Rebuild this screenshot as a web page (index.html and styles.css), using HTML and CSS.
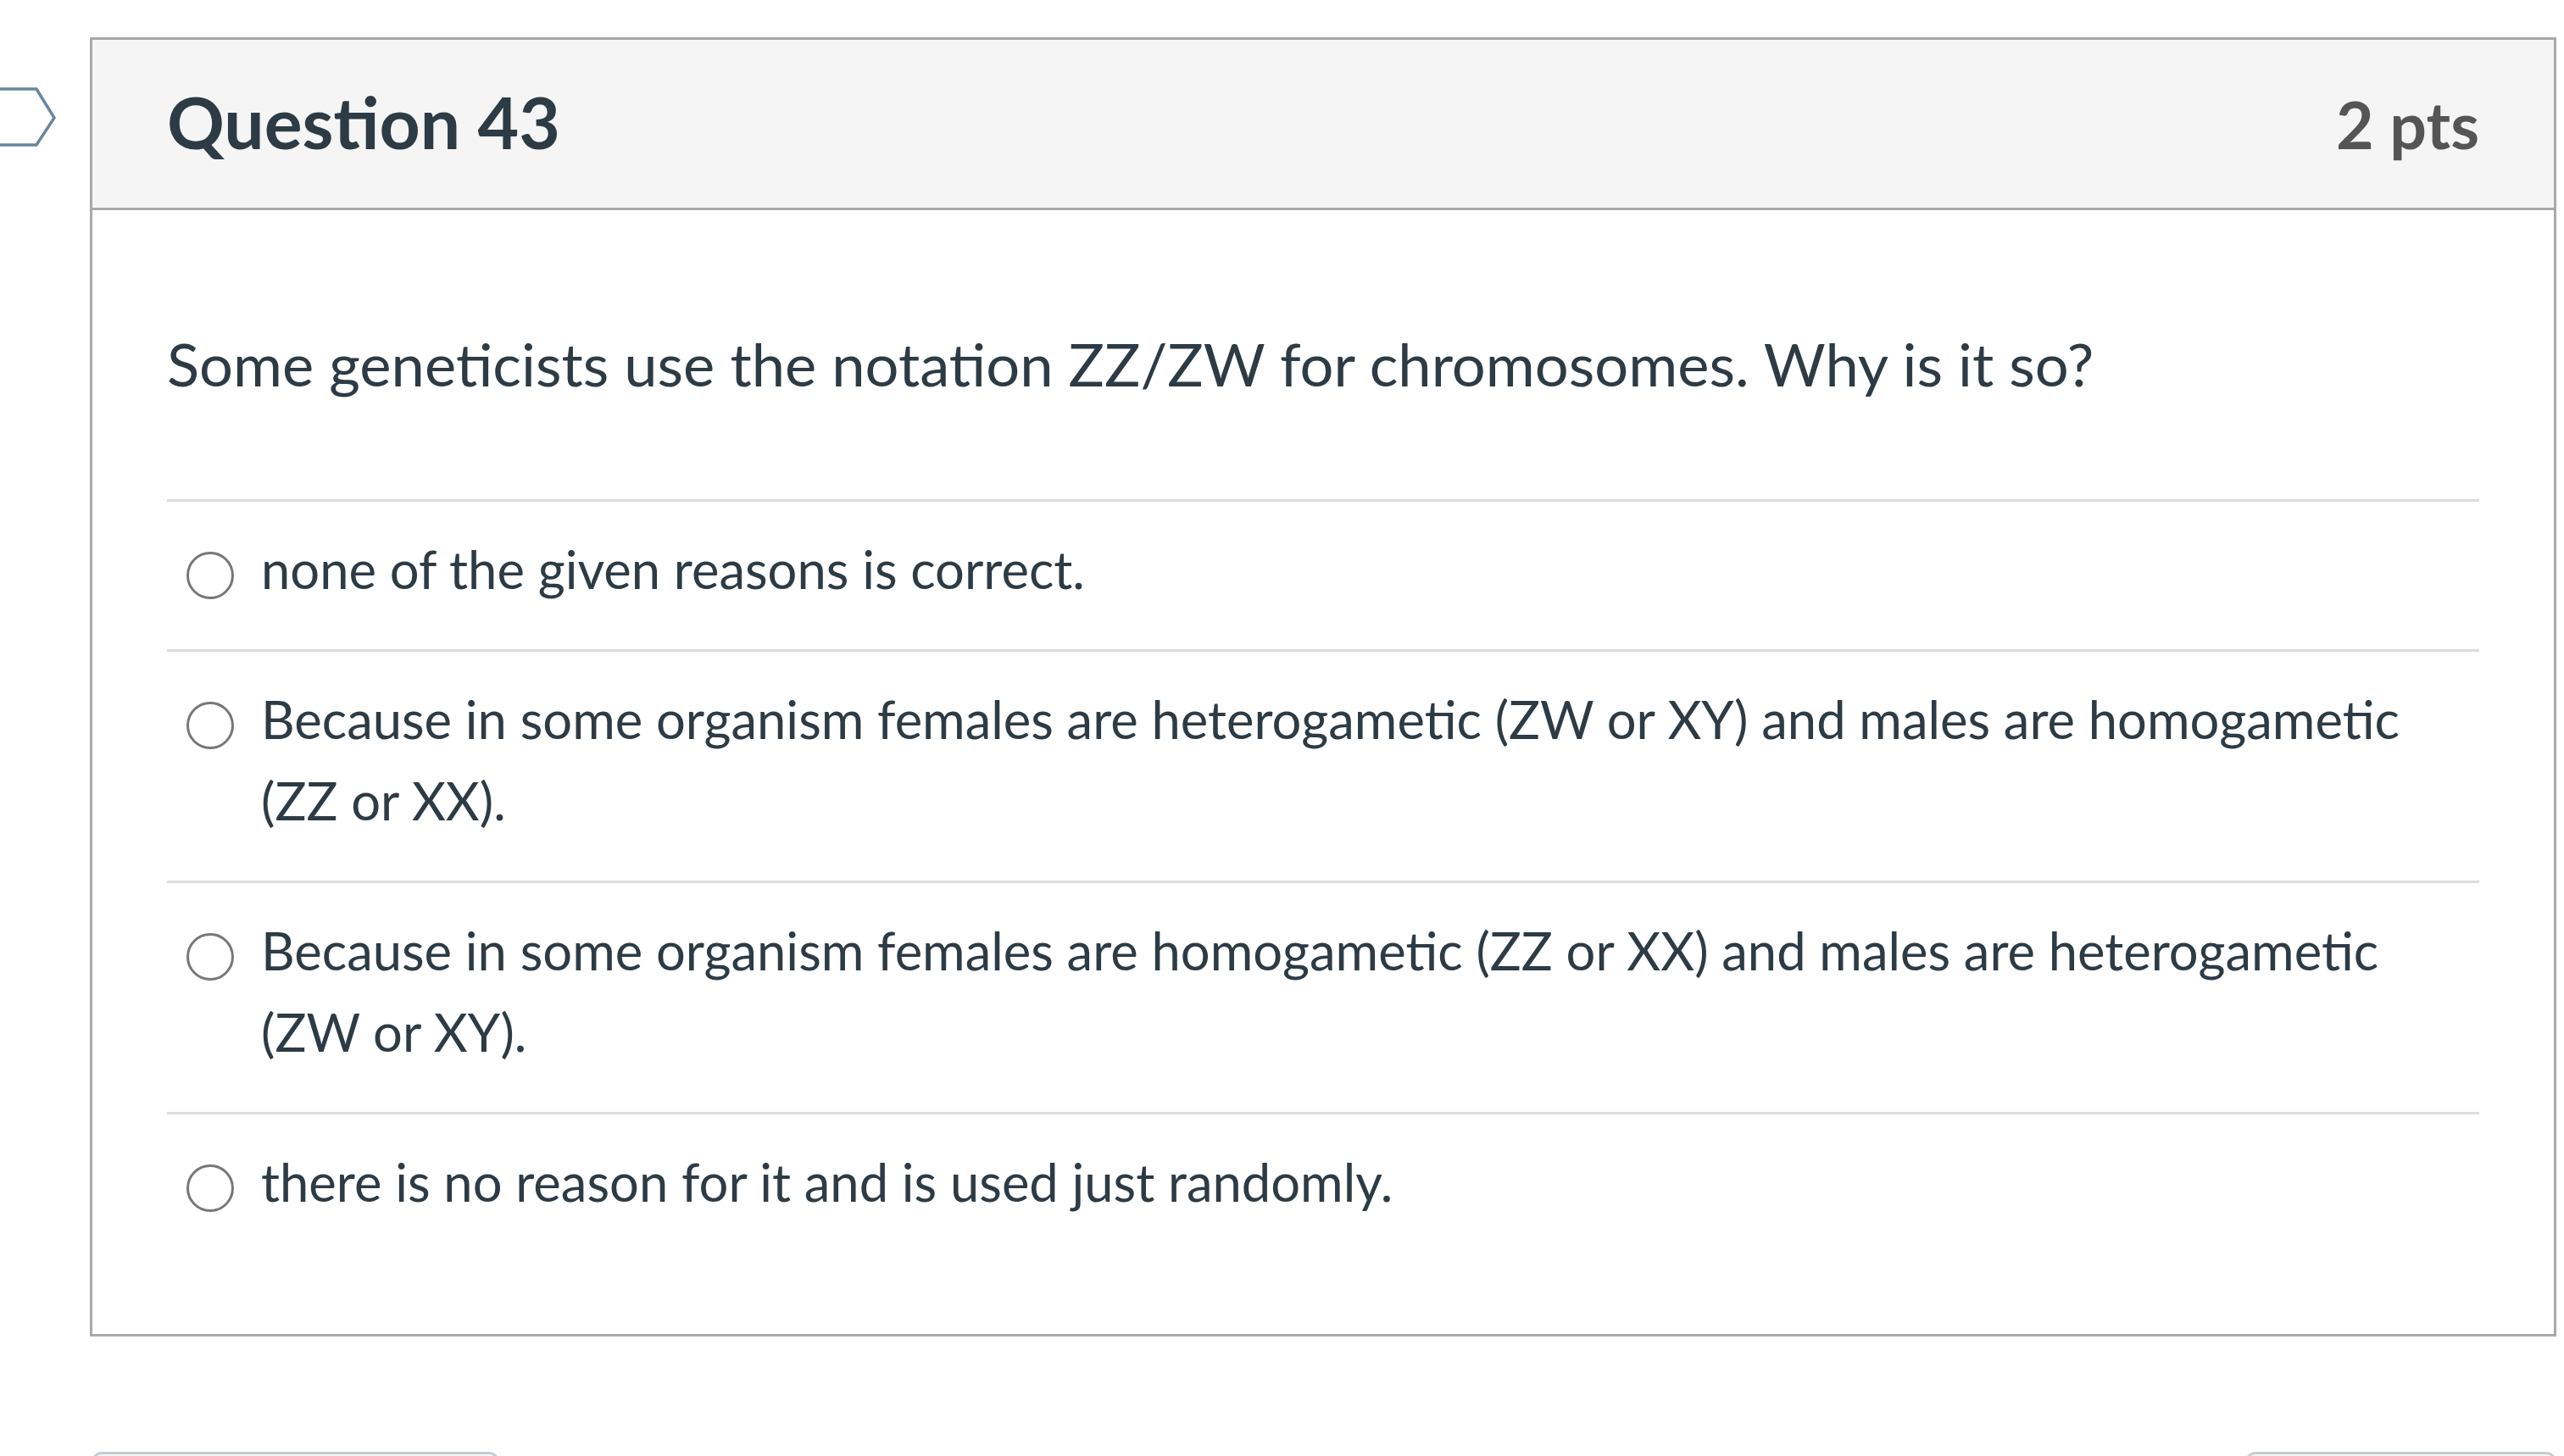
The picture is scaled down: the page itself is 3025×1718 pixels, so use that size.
FILE: index.html
```html
<!DOCTYPE html>
<html lang="en">
<head>
<meta charset="utf-8">
<title>Question 43</title>
<link rel="stylesheet" href="styles.css">
</head>
<body>
<div class="page">
  <div class="gutter">
    <svg class="flag" width="70" height="80" viewBox="0 0 70 80" aria-hidden="true">
      <polyline points="-4,5 43,5 64,39 43,71 -4,71" fill="none" stroke="#66879f" stroke-width="3.5" stroke-linejoin="miter"/>
    </svg>
  </div>
  <div class="main">
    <div class="card">
      <div class="card-header">
        <h2 class="q-title">Question 43</h2>
        <span class="pts">2 pts</span>
      </div>
      <div class="card-body">
        <p class="q-text">Some geneticists use the notation ZZ/ZW for chromosomes. Why is it so?</p>
        <div class="answers">
          <label class="answer"><span class="radio"></span><span class="answer-text">none of the given reasons is correct.</span></label>
          <label class="answer"><span class="radio"></span><span class="answer-text">Because in some organism females are heterogametic (ZW or XY) and males are homogametic (ZZ or XX).</span></label>
          <label class="answer"><span class="radio"></span><span class="answer-text">Because in some organism females are homogametic (ZZ or XX) and males are heterogametic (ZW or XY).</span></label>
          <label class="answer"><span class="radio"></span><span class="answer-text">there is no reason for it and is used just randomly.</span></label>
        </div>
      </div>
    </div>
    <div class="nav">
      <div class="btn btn-prev"></div>
      <div class="btn btn-next"></div>
    </div>
  </div>
</div>
</body>
</html>
```

FILE: styles.css
```css
html, body {
  margin: 0;
  padding: 0;
  height: 100%;
  overflow: hidden;
  background: #ffffff;
}

body {
  font-family: Lato, "Open Sans", "Liberation Sans", sans-serif;
  color: #2d3b45;
}

.page {
  display: flex;
  padding-top: 44px;
}

.gutter {
  width: 106px;
  flex-shrink: 0;
}

.flag {
  display: block;
  margin-top: 56px;
}

.main {
  width: 2910px;
  flex-shrink: 0;
}

.card {
  border: 3px solid #a9a9a9;
}

.card-header {
  display: flex;
  justify-content: space-between;
  align-items: baseline;
  padding: 47px 88px 51px;
  background: #f5f5f5;
  border-bottom: 3px solid #a9a9a9;
}

.q-title {
  margin: 0;
  font-size: 84px;
  line-height: 100px;
  font-weight: 700;
  color: #2d3b45;
}

.pts {
  font-size: 77px;
  font-weight: 700;
  color: #555555;
}

.card-body {
  padding: 133px 88px 85px;
}

.q-text {
  margin: 0 0 112px;
  font-size: 70.5px;
  line-height: 96px;
}

.answer {
  display: flex;
  align-items: flex-start;
  border-top: 3px solid #dddddd;
  padding: 31px 0 47px;
}

.radio {
  flex-shrink: 0;
  box-sizing: border-box;
  width: 56px;
  height: 56px;
  margin: 28px 0 0 23px;
  border: 3px solid #777777;
  border-radius: 50%;
  background: #ffffff;
}

.answer-text {
  margin-left: 32px;
  font-size: 61.5px;
  line-height: 96px;
}

.nav {
  display: flex;
  justify-content: space-between;
  margin-top: 136px;
}

.btn {
  height: 80px;
  box-sizing: border-box;
  border: 3px solid #c7cdd1;
  border-radius: 12px;
  background: #f5f5f5;
}

.btn-prev {
  width: 481px;
  margin-left: 2px;
}

.btn-next {
  width: 367px;
}
```
